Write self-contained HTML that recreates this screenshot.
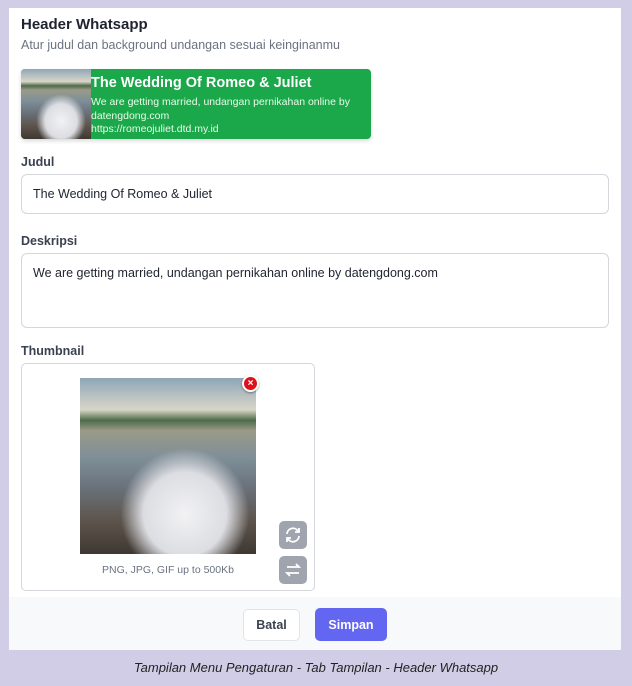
<!DOCTYPE html>
<html><head><style>
*{box-sizing:border-box;margin:0;padding:0}
body{width:632px;height:686px;background:#d1cde6;font-family:"Liberation Sans",sans-serif;position:relative;overflow:hidden}
.p{position:absolute;left:9px;top:8px;width:612px;height:642px;background:#fff}
.a{position:absolute}
.photo{background:linear-gradient(180deg,#8fa6b8 0%,#d8d6c8 18%,#4f6b4a 24%,#9a9a88 30%,#7f8f98 45%,#6c7580 60%,#5e564e 80%,#3f3832 100%);overflow:hidden}
.dress{position:absolute;background:radial-gradient(ellipse at 50% 60%,#f2f2f4 0%,#dcdde2 45%,rgba(220,220,226,0) 70%)}
.inp{position:absolute;left:12px;width:588px;border:1px solid #d4d6dc;border-radius:6px;font-size:12.5px;color:#1f2330;padding:0 11px}
.lbl{position:absolute;left:12px;font-size:12.5px;font-weight:bold;color:#3a4150}
</style></head><body>
<div class="p">
 <div class="a" style="left:12px;top:8px;font-size:15px;font-weight:bold;color:#1f2330">Header Whatsapp</div>
 <div class="a" style="left:12px;top:30px;font-size:12.5px;color:#6b7280">Atur judul dan background undangan sesuai keinginanmu</div>
 <div class="a" style="left:12px;top:61px;width:350px;height:70px;background:#1ba84a;border-radius:4px;overflow:hidden;box-shadow:0 2px 4px rgba(0,0,0,.15)">
  <div class="a photo" style="left:0;top:0;width:70px;height:70px"><div class="dress" style="left:15px;top:25px;width:50px;height:45px"></div></div>
  <div class="a" style="left:70px;top:6px;color:#fff;font-size:14.5px;font-weight:bold">The Wedding Of Romeo &amp; Juliet</div>
  <div class="a" style="left:70px;top:27px;width:280px;color:#eafbe9;font-size:10.5px;line-height:13.5px">We are getting married, undangan pernikahan online by datengdong.com<br>https://romeojuliet.dtd.my.id</div>
 </div>
 <div class="lbl" style="top:147px">Judul</div>
 <div class="inp" style="top:166px;height:40px;line-height:38px">The Wedding Of Romeo &amp; Juliet</div>
 <div class="lbl" style="top:226px">Deskripsi</div>
 <div class="inp" style="top:245px;height:75px;padding-top:12px">We are getting married, undangan pernikahan online by datengdong.com</div>
 <div class="lbl" style="top:336px">Thumbnail</div>
 <div class="a" style="left:12px;top:355px;width:294px;height:228px;border:1px solid #d4d6dc;border-radius:5px">
  <div class="a photo" style="left:58px;top:14px;width:176px;height:176px"><div class="dress" style="left:40px;top:70px;width:130px;height:110px"></div></div>
  <div class="a" style="left:220px;top:11px;width:17px;height:17px;border-radius:50%;background:#e0101a;border:2px solid #fff;box-shadow:0 1px 2px rgba(0,0,0,.4);color:#fff;font-size:10px;font-weight:bold;text-align:center;line-height:13px">×</div>
  <div class="a" style="left:0;width:292px;top:200px;text-align:center;font-size:10.5px;color:#6b7280">PNG, JPG, GIF up to 500Kb</div>
  <div class="a" style="left:257px;top:157px;width:28px;height:28px;background:#a0a4ae;border-radius:5px"><svg width="28" height="28" viewBox="0 0 28 28" fill="none" stroke="#fff" stroke-width="1.8"><path d="M8 13a6 6 0 0 1 11-3l1 1M20 15a6 6 0 0 1-11 3l-1-1"/><path d="M20 7v4h-4M8 21v-4h4"/></svg></div>
  <div class="a" style="left:257px;top:192px;width:28px;height:28px;background:#a0a4ae;border-radius:5px"><svg width="28" height="28" viewBox="0 0 28 28" fill="none" stroke="#fff" stroke-width="1.8"><path d="M8 11h12l-3-3M20 17H8l3 3"/></svg></div>
 </div>
 <div class="a" style="left:0;top:589px;width:612px;height:53px;background:#f8f9fb"></div>
 <div class="a" style="left:234px;top:601px;width:57px;height:32px;background:#fff;border:1px solid #e2e4e8;border-radius:5px;text-align:center;line-height:30px;font-size:12.5px;font-weight:bold;color:#3a4150">Batal</div>
 <div class="a" style="left:306px;top:600px;width:72px;height:33px;background:#6366f1;border-radius:5px;text-align:center;padding-top:10px;font-size:12.5px;font-weight:bold;color:#fff">Simpan</div>
</div>
<div class="a" style="left:0;width:632px;top:660px;text-align:center;font-size:13px;font-style:italic;color:#222">Tampilan Menu Pengaturan - Tab Tampilan - Header Whatsapp</div>
</body></html>
